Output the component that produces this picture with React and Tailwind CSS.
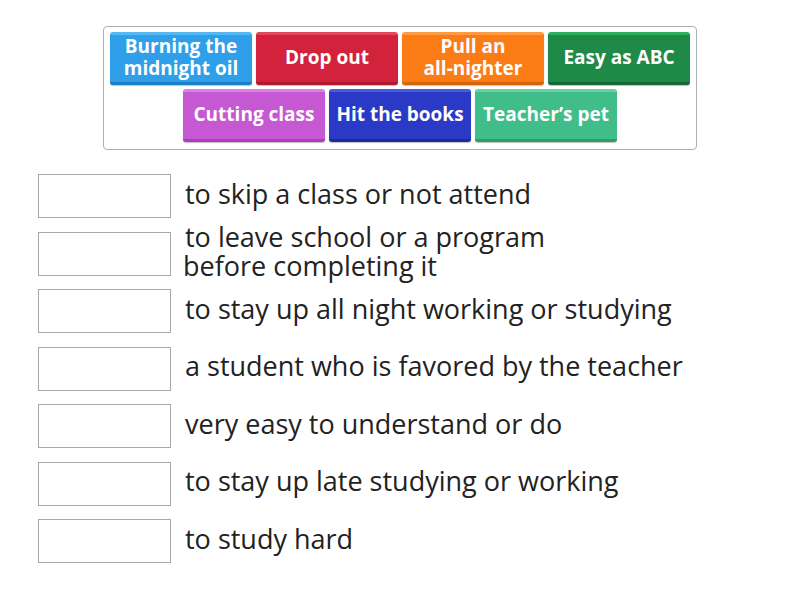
import React from 'react';

const tiles = [
  [
    { label: 'Burning the midnight oil', lines: ['Burning the', 'midnight oil'], cls: 'bg-[#2e9fe8] border-t-[#56b8f2] border-b-[#1b7fc6]' },
    { label: 'Drop out', lines: ['Drop out'], cls: 'bg-[#d3223b] border-t-[#e2475c] border-b-[#ae1a2e]' },
    { label: 'Pull an all-nighter', lines: ['Pull an', 'all-nighter'], cls: 'bg-[#fb7c15] border-t-[#fd9a44] border-b-[#d6640b]' },
    { label: 'Easy as ABC', lines: ['Easy as ABC'], cls: 'bg-[#1f8947] border-t-[#2fae5e] border-b-[#176a37]' },
  ],
  [
    { label: 'Cutting class', lines: ['Cutting class'], cls: 'bg-[#c758d4] border-t-[#db80e4] border-b-[#b536c2]' },
    { label: 'Hit the books', lines: ['Hit the books'], cls: 'bg-[#2b3ac6] border-t-[#4a5ae0] border-b-[#1e2a9c]' },
    { label: "Teacher's pet", lines: ['Teacher\u2019s pet'], cls: 'bg-[#40bd88] border-t-[#66d3a4] border-b-[#2f9c6c]' },
  ],
];

const defs = [
  ['to skip a class or not attend'],
  ['to leave school or a program', 'before completing it'],
  ['to stay up all night working or studying'],
  ['a student who is favored by the teacher'],
  ['very easy to understand or do'],
  ['to stay up late studying or working'],
  ['to study hard'],
];

function Tile({ tile }) {
  return (
    <div
      className={`w-[142px] h-[53px] rounded-[3px] border-t-[3px] border-b-[3px] flex flex-col items-center justify-center text-white font-bold text-[19px] leading-[22px] pb-[3px] shadow-[0_1px_1px_rgba(0,0,0,0.25)] ${tile.cls}`}
    >
      {tile.lines.map((l) => (
        <span key={l} className="whitespace-nowrap">{l}</span>
      ))}
    </div>
  );
}

export default function App() {
  return (
    <div className="w-[800px] h-[600px] bg-white" style={{ fontFamily: '"Open Sans", sans-serif' }}>
      <div className="pt-[26px] flex justify-center">
        <div className="w-[594px] h-[124px] border border-[#b0b0b0] rounded-[4px] px-[6px] pt-[5px] flex flex-col items-center gap-[4px]">
          {tiles.map((row, i) => (
            <div key={i} className="flex gap-[4px]">
              {row.map((t) => (
                <Tile key={t.label} tile={t} />
              ))}
            </div>
          ))}
        </div>
      </div>
      <div className="mt-[24px] pl-[38px] flex flex-col gap-[13.5px]">
        {defs.map((d, i) => (
          <div key={i} className="flex items-center h-[44px]">
            <div className="w-[133px] h-[44px] border border-[#a8a8a8] shrink-0" />
            <div className="ml-[14px] mb-[6px] text-[27px] leading-[29px] text-[#222] whitespace-nowrap">
              {d.map((l, j) => (
                <div key={j} className={j > 0 ? '-ml-[2px]' : ''}>{l}</div>
              ))}
            </div>
          </div>
        ))}
      </div>
    </div>
  );
}
